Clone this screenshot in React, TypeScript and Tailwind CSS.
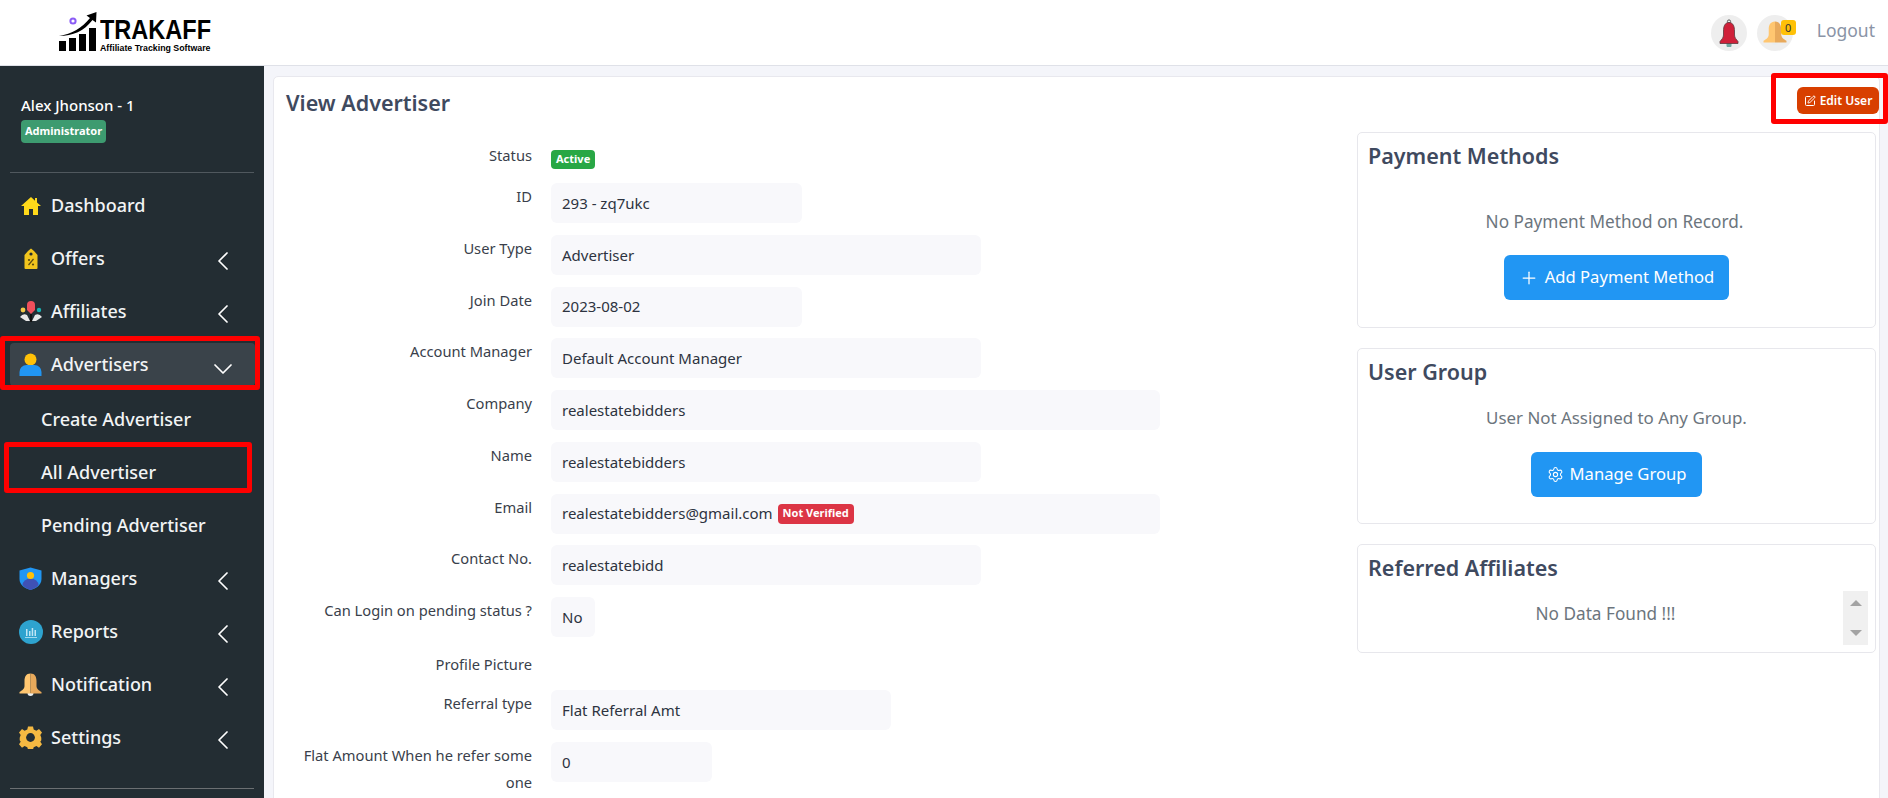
import React from 'react';
import { ChevronLeft, ChevronDown, Plus, Settings as Cog, SquarePen } from 'lucide-react';

const HomeIcon = () => (
  <svg width="22" height="20" viewBox="0 0 22 20"><path d="M11 1 L1 10 H4 V19 H9 V13 H13 V19 H18 V10 H21 L17 6.5 V2 H15 V4.7 Z" fill="#ffd91a" /></svg>
);
const TagIcon = () => (
  <svg width="16" height="22" viewBox="0 0 16 22">
    <path d="M5 3 L8 0.5 L11 3 L14.5 7 V20 a1 1 0 0 1 -1 1 H2.5 a1 1 0 0 1 -1 -1 V7 Z" fill="#f2c51d" />
    <circle cx="8" cy="6" r="1.6" fill="#232d33" />
    <path d="M5.5 17 L10.5 11" stroke="#5b4a10" strokeWidth="1.2" />
    <circle cx="6" cy="12" r="1.1" fill="#5b4a10" /><circle cx="10" cy="16.5" r="1.1" fill="#5b4a10" />
  </svg>
);
const TeamIcon = () => (
  <svg width="24" height="22" viewBox="0 0 24 22">
    <path d="M8 4 a4 4 0 0 1 8 0 V9 L12 13 L8 9 Z" fill="#ef4f5b" />
    <circle cx="4" cy="9" r="2.4" fill="#f1c84b" />
    <circle cx="20" cy="9" r="2.2" fill="#17b5b5" />
    <path d="M1 16 q3 -4 7 -2 l3 6 H7 Z M23 16 q-3 -4 -7 -2 l-3 6 h4 Z" fill="#e8e8e8" />
    <path d="M11 13 h2 v8 h-2 Z" fill="#111" />
  </svg>
);
const PersonIcon = () => (
  <svg width="23" height="23" viewBox="0 0 23 23">
    <circle cx="11.5" cy="6.5" r="6" fill="#ffc107" />
    <path d="M0.5 23 V19 a7 7 0 0 1 7 -7 H15.5 a7 7 0 0 1 7 7 V23 Z" fill="#2196f3" />
  </svg>
);
const ShieldIcon = () => (
  <svg width="23" height="23" viewBox="0 0 23 23">
    <path d="M11.5 0.5 L22.5 3.5 V12 C22.5 18 17 21.5 11.5 23 C6 21.5 0.5 18 0.5 12 V3.5 Z" fill="#2196f3" />
    <path d="M3.5 18 a8 6.5 0 0 1 16 0 C17 21 14 22.2 11.5 23 C9 22.2 6 21 3.5 18 Z" fill="#3f51b5" />
    <circle cx="11.5" cy="8.5" r="3.6" fill="#ffc107" />
  </svg>
);
const ReportIcon = () => (
  <svg width="24" height="24" viewBox="0 0 24 24">
    <circle cx="12" cy="12" r="12" fill="#2ea3cf" />
    <path d="M7 9 h1.5 v7 H7 Z M10 11 h1.5 v5 H10 Z M12.7 8 h1.5 v8 h-1.5 Z M15.5 10 h1.5 v6 h-1.5 Z" fill="#bfe6f5" />
    <path d="M6 17 h12 v0.8 H6 Z" fill="#bfe6f5" />
  </svg>
);
const BellIcon = ({ size = 23 }: { size?: number }) => (
  <svg width={size} height={size} viewBox="0 0 23 23">
    <path d="M8.5 20 a3 3 0 0 0 6 0 Z" fill="#e8edf0" />
    <path d="M11.5 0.5 C7 0.5 5.5 4 5.5 8 V13 C5.5 16 3 17.5 0.5 19 V20.5 H11.5 Z" fill="#ffc670" />
    <path d="M11.5 0.5 C16 0.5 17.5 4 17.5 8 V13 C17.5 16 20 17.5 22.5 19 V20.5 H11.5 Z" fill="#e8a95b" />
  </svg>
);
const RedBell = () => (
  <svg width="24" height="28" viewBox="0 0 24 28">
    <path d="M9.5 24 h5 v2.5 a2.5 2 0 0 1 -5 0 Z" fill="#6fa8a0" />
    <circle cx="12" cy="2.5" r="1.6" fill="none" stroke="#555" strokeWidth="1" />
    <path d="M12 3.5 C7.5 3.5 6.5 8 6.5 12 V16 C6.5 19 4.5 20.5 3 22.5 V24.5 H21 V22.5 C19.5 20.5 17.5 19 17.5 16 V12 C17.5 8 16.5 3.5 12 3.5 Z" fill="#cf2039" stroke="#5c3a3f" strokeWidth="0.8" />
  </svg>
);
const GearIcon = () => (
  <svg width="23" height="23" viewBox="0 0 23 23">
    <path d="M9 0.5 h5 l0.7 3 2.7 1.2 2.6 -1.6 3 3.4 -1.7 2.6 1 2.6 v0 l0 2.6 -1 1.4 1.7 2.6 -3 3.4 -2.6 -1.6 -2.7 1.2 -0.7 2.1 h-5 l-0.7 -2.1 -2.7 -1.2 -2.6 1.6 -3 -3.4 1.7 -2.6 -1 -1.4 v-2.6 l1 -2.6 -1.7 -2.6 3 -3.4 2.6 1.6 2.7 -1.2 Z" fill="#f5b942" />
    <circle cx="11.5" cy="11.5" r="4.4" fill="#232d33" />
  </svg>
);

const Logo = () => (
  <div className="flex items-start w-[264px] h-[66px] relative">
    <svg width="42" height="42" viewBox="0 0 42 42" className="ml-[58px] mt-[10px] shrink-0">
      <circle cx="15" cy="11" r="2.6" fill="none" stroke="#8b5cf6" strokeWidth="2" />
      <path d="M1 26 C14 24 24 18 32 8 L28.5 5.5 L38.5 2 L38 12.5 L34.5 10 C26 21 15 26 1 26 Z" fill="#000" />
      <path d="M1 31 h7 v10 H1 Z M11 28 h7 v13 h-7 Z M21 24 h7 v17 h-7 Z M31 18 h7 v23 h-7 Z" fill="#000" />
    </svg>
    <div className="mt-[14px] font-['Liberation_Sans',sans-serif] text-black">
      <div className="text-[28px] leading-[32px] font-bold origin-left scale-x-[0.84] whitespace-nowrap">TRAKAFF</div>
      <div className="text-[8.8px] leading-[5px] font-bold whitespace-nowrap">Affiliate Tracking Software</div>
    </div>
  </div>
);

const NavItem = ({ icon, label, open, active, noArrow }: { icon: React.ReactNode; label: string; open?: boolean; active?: boolean; noArrow?: boolean }) => (
  <div className={`flex items-center h-[43px] mb-[10px] ml-[10px] mr-[9px] rounded-[4px] ${active ? 'bg-[#3a434a]' : ''}`}>
    <div className="w-[41px] flex justify-center shrink-0">{icon}</div>
    <span className="text-[18px] font-medium text-[#f2f4f5]">{label}</span>
    {!noArrow && (
      <span className={`ml-auto mr-[16px] ${open ? 'mt-[8px]' : 'mt-[4px]'}`}>
        {open ? <ChevronDown size={32} className="text-white" strokeWidth={1.3} /> : <ChevronLeft size={32} className="text-white" strokeWidth={1.3} />}
      </span>
    )}
  </div>
);

const SubItem = ({ label }: { label: string }) => (
  <div className="h-[43px] mb-[10px] pl-[41px] flex items-center text-[18px] font-medium text-[#f2f4f5]">{label}</div>
);

const Row = ({ label, value, w }: { label: string; value: React.ReactNode; w: string }) => (
  <div className="flex mb-[11.75px]">
    <div className="w-[246px] text-right text-[14.7px] leading-[27px] text-[#3a3f4b] shrink-0">{label}</div>
    <div className={`ml-[19px] h-[40px] px-[11px] bg-[#f8f8fb] rounded-[6px] flex items-center text-[15px] text-[#2d3340] ${w}`}>{value}</div>
  </div>
);

const SideCard = ({ title, children }: { title: string; children: React.ReactNode }) => (
  <div className="h-full border border-[#e7e7ec] rounded-[5px] px-[10px] bg-white">
    <h3 className="text-[21.5px] leading-[28px] font-semibold text-[#3f4a5f] pt-[9px]">{title}</h3>
    {children}
  </div>
);

export default function App() {
  return (
    <div className="h-[798px] overflow-hidden relative bg-[#f4f5fa] font-['Noto_Sans',sans-serif]">
      <header className="h-[66px] bg-white flex items-center border-b border-[#dfe1e8]">
        <Logo />
        <div className="ml-auto flex items-center">
          <div className="w-[36px] h-[36px] rounded-full bg-[#eeeeee] flex items-center justify-center"><RedBell /></div>
          <div className="relative ml-[10px] w-[36px] h-[36px] rounded-full bg-[#eeeeee] flex items-center justify-center">
            <BellIcon size={24} />
            <span className="absolute left-[24px] top-[5px] w-[15px] h-[15px] rounded-[3px] bg-[#ffc107] text-[11px] leading-[15px] text-center text-[#333]">0</span>
          </div>
          <a className="ml-[24px] mr-[13px] mb-[5px] text-[17.5px] text-[#8a94a6]">Logout</a>
        </div>
      </header>

      <div className="flex h-[732px]">
        <aside className="w-[264px] shrink-0 bg-[#232d33] overflow-hidden">
          <div className="px-[21px] pt-[27px]">
            <div className="text-[15px] leading-[24px] font-medium text-white">Alex Jhonson - 1</div>
            <span className="mt-[3px] inline-flex items-center h-[23px] px-[4px] rounded-[4px] bg-[#3d9b70] text-[11px] font-bold text-white">Administrator</span>
          </div>
          <div className="mx-[10px] mt-[29px] mb-[11px] border-t border-[#50585e]" />
          <nav>
            <NavItem icon={<HomeIcon />} label="Dashboard" noArrow />
            <NavItem icon={<TagIcon />} label="Offers" />
            <NavItem icon={<TeamIcon />} label="Affiliates" />
            <NavItem icon={<PersonIcon />} label="Advertisers" open active />
            <div className="pt-[2px]">
              <SubItem label="Create Advertiser" />
              <SubItem label="All Advertiser" />
              <SubItem label="Pending Advertiser" />
            </div>
            <NavItem icon={<ShieldIcon />} label="Managers" />
            <NavItem icon={<ReportIcon />} label="Reports" />
            <NavItem icon={<BellIcon />} label="Notification" />
            <NavItem icon={<GearIcon />} label="Settings" />
          </nav>
          <div className="mx-[10px] mt-[29px] border-t border-[#6b6f72]" />
        </aside>

        <main className="flex-1 pl-[9px] pr-[8px] pt-[10px] min-w-0">
          <div className="h-[800px] bg-white border border-[#e8e8ee] rounded-[5px] flex">
            <div className="flex-1 min-w-0 pl-[12px]">
              <h2 className="text-[21.5px] leading-[28px] font-semibold text-[#3f4a5f] pt-[12px]">View Advertiser</h2>
              <div className="mt-[25px]">
                <div className="flex h-[41px]">
                  <div className="w-[246px] text-right text-[14.7px] leading-[27px] text-[#3a3f4b] shrink-0">Status</div>
                  <div className="ml-[19px] mt-[3px]">
                    <span className="inline-flex items-center h-[19px] px-[5px] rounded-[4px] bg-[#28a745] text-[11px] font-bold text-white">Active</span>
                  </div>
                </div>
                <Row label="ID" value="293 - zq7ukc" w="w-[251px]" />
                <Row label="User Type" value="Advertiser" w="w-[430px]" />
                <Row label="Join Date" value="2023-08-02" w="w-[251px]" />
                <Row label="Account Manager" value="Default Account Manager" w="w-[430px]" />
                <Row label="Company" value="realestatebidders" w="w-[609px]" />
                <Row label="Name" value="realestatebidders" w="w-[430px]" />
                <Row
                  label="Email"
                  w="w-[609px]"
                  value={
                    <>
                      realestatebidders@gmail.com
                      <span className="ml-[5px] inline-flex items-center h-[20px] px-[5px] rounded-[4px] bg-[#dc3545] text-[11px] font-bold text-white">Not Verified</span>
                    </>
                  }
                />
                <Row label="Contact No." value="realestatebidd" w="w-[430px]" />
                <Row label="Can Login on pending status ?" value="No" w="w-[44px]" />
                <div className="h-[41.25px] pt-[2px] flex">
                  <div className="w-[246px] text-right text-[14.7px] leading-[27px] text-[#3a3f4b]">Profile Picture</div>
                </div>
                <Row label="Referral type" value="Flat Referral Amt" w="w-[340px]" />
                <Row label="Flat Amount When he refer some one" value="0" w="w-[161px]" />
              </div>
            </div>

            <div className="w-[519px] shrink-0 mr-[3px]">
              <div className="flex justify-end pt-[10px]">
                <button className="h-[27px] w-[82px] -mr-[3px] rounded-[6px] bg-[#d83f00] text-white text-[12px] font-semibold flex items-center justify-center gap-[4px]">
                  <SquarePen size={12} />
                  Edit User
                </button>
              </div>
              <div className="mt-[18px] flex flex-col gap-[20px]">
                <div className="h-[196px]">
                  <SideCard title="Payment Methods">
                    <p className="text-[17.2px] leading-[24px] text-[#6c757d] text-center pr-[4px] mt-[40px]">No Payment Method on Record.</p>
                    <div className="flex justify-center mt-[21px]">
                      <button className="h-[45px] w-[225px] rounded-[6px] bg-[#2196f3] text-white text-[16.6px] flex items-center justify-center gap-[6px]">
                        <Plus size={20} strokeWidth={1.5} />
                        Add Payment Method
                      </button>
                    </div>
                  </SideCard>
                </div>
                <SideCard title="User Group">
                  <p className="text-[16.9px] leading-[24px] text-[#6c757d] text-center mt-[20px]">User Not Assigned to Any Group.</p>
                  <div className="flex justify-center mt-[22px] pb-[26px]">
                    <button className="h-[45px] w-[171px] rounded-[6px] bg-[#2196f3] text-white text-[16.6px] flex items-center justify-center gap-[6px]">
                      <Cog size={17} strokeWidth={1.5} />
                      Manage Group
                    </button>
                  </div>
                </SideCard>
                <SideCard title="Referred Affiliates">
                  <div className="flex h-[54px] mt-[9px] mb-[7px]">
                    <p className="flex-1 text-center text-[17.2px] leading-[24px] text-[#6c757d] pt-[11px]">No Data Found !!!</p>
                    <div className="w-[25px] -mr-[3px] bg-[#f0f0f0] flex flex-col items-center justify-between py-[9px]">
                      <span className="w-0 h-0 border-x-[6px] border-x-transparent border-b-[6px] border-b-[#a3a3a3]" />
                      <span className="w-0 h-0 border-x-[6px] border-x-transparent border-t-[6px] border-t-[#a3a3a3]" />
                    </div>
                  </div>
                </SideCard>
              </div>
            </div>
          </div>
        </main>
      </div>

      {/* red annotation boxes from the screenshot */}
      <div className="absolute left-0 top-[336px] w-[260px] h-[54px] border-[5px] border-[#ff0000] rounded-[3px]" />
      <div className="absolute left-[4px] top-[442px] w-[248px] h-[51px] border-[5px] border-[#ff0000] rounded-[3px]" />
      <div className="absolute left-[1771px] top-[73px] w-[117px] h-[51px] border-[5px] border-[#ff0000] rounded-[3px]" />
    </div>
  );
}
